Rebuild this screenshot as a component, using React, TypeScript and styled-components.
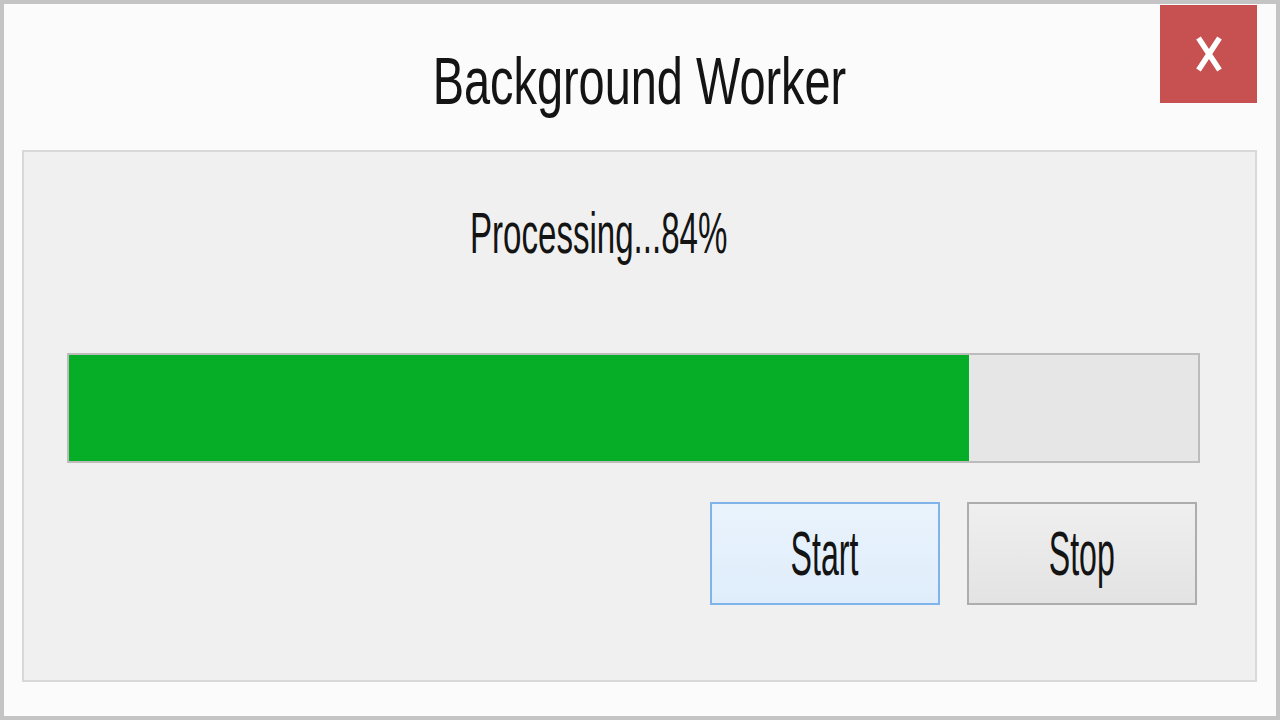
import React from 'react';
import styled, { createGlobalStyle } from 'styled-components';

const GlobalStyle = createGlobalStyle`
  html, body {
    margin: 0;
    padding: 0;
    background: #fbfbfb;
  }
  body {
    font-family: "Liberation Sans", Arial, sans-serif;
    color: #141414;
  }
`;

const Window = styled.div`
  box-sizing: border-box;
  width: 1280px;
  height: 720px;
  border: 4px solid #c4c4c4;
  background: #fbfbfb;
  display: flex;
  flex-direction: column;
  padding: 0 19px 34px 18px;
`;

const TitleBar = styled.div`
  display: grid;
  grid-template-columns: 1fr auto 1fr;
  align-items: start;
  height: 146px;
  margin-right: -19px;
  padding-right: 19px;
`;

const Title = styled.div`
  grid-column: 2;
  margin-top: 43px;
  font-size: 67px;
  line-height: 1;
  white-space: nowrap;
`;

const Squeezed = styled.span<{ $scale: number }>`
  display: inline-block;
  transform: scaleX(${({ $scale }) => $scale});
  transform-origin: center;
`;

const CloseButton = styled.button`
  grid-column: 3;
  justify-self: end;
  margin-top: 1px;
  width: 97px;
  height: 98px;
  border: none;
  padding: 0;
  background: #c75050;
  display: flex;
  align-items: center;
  justify-content: center;
`;

const Panel = styled.div`
  flex: 1;
  border: 2px solid #d8d8d8;
  background: #f0f0f0;
  padding: 52px 55px 0 43px;
  display: flex;
  flex-direction: column;
`;

const StatusLabel = styled.div`
  width: 1064px;
  display: flex;
  justify-content: center;
  font-size: 58px;
  line-height: 1;
  white-space: nowrap;
`;

const ProgressTrack = styled.div`
  margin-top: 91px;
  height: 106px;
  border: 2px solid #bcbcbc;
  background: #e6e6e6;
  display: flex;
`;

const ProgressFill = styled.div`
  height: 100%;
  background: #06ad26;
`;

const ButtonRow = styled.div`
  margin-top: 39px;
  display: flex;
  justify-content: flex-end;
  gap: 27px;
  padding-right: 3px;
`;

const Button = styled.button<{ $focused?: boolean }>`
  box-sizing: border-box;
  width: 230px;
  height: 103px;
  padding: 0 0 0 ${({ $focused }) => ($focused ? '0' : '0')};
  font-family: "Liberation Sans", Arial, sans-serif;
  font-size: 63px;
  line-height: 1;
  color: #141414;
  border: 2px solid ${({ $focused }) => ($focused ? '#7eb4ea' : '#adadad')};
  background: ${({ $focused }) =>
    $focused
      ? 'linear-gradient(#e9f3fc, #dfedfb)'
      : 'linear-gradient(#efefef, #e3e3e3)'};
  display: flex;
  align-items: center;
  justify-content: center;
`;

const CloseIcon = () => (
  <svg width="28" height="38" viewBox="0 0 28 38">
    <path d="M3.5 3 L24.5 35 M24.5 3 L3.5 35" stroke="#fff" strokeWidth="5.5" strokeLinecap="butt" fill="none" />
  </svg>
);

export default function App() {
  const progress = 0.797;
  return (
    <>
      <GlobalStyle />
      <Window>
        <TitleBar>
          <Title>
            <Squeezed $scale={0.7}>Background Worker</Squeezed>
          </Title>
          <CloseButton aria-label="Close">
            <CloseIcon />
          </CloseButton>
        </TitleBar>
        <Panel>
          <StatusLabel>
            <Squeezed $scale={0.57}>Processing...84%</Squeezed>
          </StatusLabel>
          <ProgressTrack>
            <ProgressFill style={{ width: `${progress * 100}%` }} />
          </ProgressTrack>
          <ButtonRow>
            <Button $focused>
              <Squeezed $scale={0.51}>Start</Squeezed>
            </Button>
            <Button>
              <Squeezed $scale={0.51}>Stop</Squeezed>
            </Button>
          </ButtonRow>
        </Panel>
      </Window>
    </>
  );
}
